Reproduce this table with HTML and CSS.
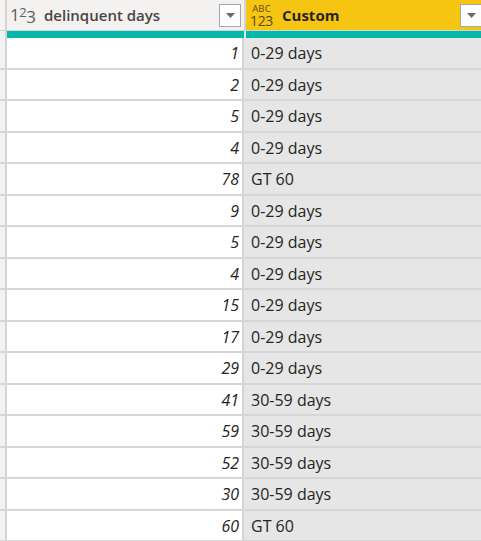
FILE: index.html
```html
<!DOCTYPE html>
<html>
<head>
<meta charset="utf-8">
<link rel="stylesheet" href="styles.css">
</head>
<body>
<div class="grid">
  <div class="row head">
    <div class="gut"></div>
    <div class="c1 hc">
      <span class="t123">1<sup>2</sup><sub>3</sub></span>
      <span class="hname">delinquent days</span>
      <span class="dd"><svg width="9" height="5" viewBox="0 0 9 5"><path d="M0 0H9L4.5 5Z" fill="#6b6b6b"/></svg></span>
    </div>
    <div class="c2 hc sel">
      <span class="tabc"><span class="ta">ABC</span><span class="tn">123</span></span>
      <span class="hname">Custom</span>
      <span class="dd"><svg width="9" height="5" viewBox="0 0 9 5"><path d="M0 0H9L4.5 5Z" fill="#6b6b6b"/></svg></span>
    </div>
  </div>
  <div class="row bar">
    <div class="gut"></div>
    <div class="c1 teal"></div>
    <div class="c2 teal"></div>
  </div>
  <div class="body">
    <div class="row r"><div class="gut"></div><div class="c1 num">1</div><div class="c2 txt">0-29 days</div></div>
    <div class="row r"><div class="gut"></div><div class="c1 num">2</div><div class="c2 txt">0-29 days</div></div>
    <div class="row r"><div class="gut"></div><div class="c1 num">5</div><div class="c2 txt">0-29 days</div></div>
    <div class="row r"><div class="gut"></div><div class="c1 num">4</div><div class="c2 txt">0-29 days</div></div>
    <div class="row r"><div class="gut"></div><div class="c1 num">78</div><div class="c2 txt">GT 60</div></div>
    <div class="row r"><div class="gut"></div><div class="c1 num">9</div><div class="c2 txt">0-29 days</div></div>
    <div class="row r"><div class="gut"></div><div class="c1 num">5</div><div class="c2 txt">0-29 days</div></div>
    <div class="row r"><div class="gut"></div><div class="c1 num">4</div><div class="c2 txt">0-29 days</div></div>
    <div class="row r"><div class="gut"></div><div class="c1 num">15</div><div class="c2 txt">0-29 days</div></div>
    <div class="row r"><div class="gut"></div><div class="c1 num">17</div><div class="c2 txt">0-29 days</div></div>
    <div class="row r"><div class="gut"></div><div class="c1 num">29</div><div class="c2 txt">0-29 days</div></div>
    <div class="row r"><div class="gut"></div><div class="c1 num">41</div><div class="c2 txt">30-59 days</div></div>
    <div class="row r"><div class="gut"></div><div class="c1 num">59</div><div class="c2 txt">30-59 days</div></div>
    <div class="row r"><div class="gut"></div><div class="c1 num">52</div><div class="c2 txt">30-59 days</div></div>
    <div class="row r"><div class="gut"></div><div class="c1 num">30</div><div class="c2 txt">30-59 days</div></div>
    <div class="row r"><div class="gut"></div><div class="c1 num">60</div><div class="c2 txt">GT 60</div></div>
  </div>
</div>
</body>
</html>
```
FILE: styles.css
```css
html, body {
  margin: 0;
  padding: 0;
  background: #ffffff;
  overflow: hidden;
}
body {
  font-family: "Open Sans", "Noto Sans", sans-serif;
  color: #252423;
}
.grid {
  width: 481px;
  height: 541px;
  overflow: hidden;
}
.row {
  display: flex;
}
.gut {
  flex: 0 0 5px;
  background: #f3f2f1;
  border-right: 2px solid #d4d4d4;
}
.c1 {
  flex: 0 0 237px;
  border-right: 2px solid #d4d4d4;
}
.c2 {
  flex: 1 1 auto;
  min-width: 0;
}
.head {
  height: 30px;
  border-bottom: 1px solid #d4d4d4;
}
.hc {
  display: flex;
  align-items: center;
  background: #f3f2f1;
  position: relative;
}
.hc.sel {
  background: #f5c511;
}
.hname {
  font-weight: 600;
  font-size: 15px;
  color: #484644;
}
.sel .hname {
  color: #252423;
  font-weight: 700;
}
.t123 {
  font-size: 17px;
  color: #605e5c;
  margin-left: 3px;
  width: 34px;
  line-height: 1;
  letter-spacing: -0.5px;
}
.t123 sup {
  font-size: 13px;
  vertical-align: 4px;
}
.t123 sub {
  font-size: 17px;
  vertical-align: -2px;
}
.tabc {
  display: flex;
  flex-direction: column;
  align-items: center;
  margin-left: 4px;
  width: 23px;
  margin-right: 9px;
  color: #5b4a10;
}
.ta {
  display: block;
  font-size: 9.5px;
  line-height: 10px;
  letter-spacing: 0.2px;
}
.tn {
  display: block;
  font-size: 14px;
  line-height: 13px;
  letter-spacing: -0.3px;
}
.dd {
  position: absolute;
  right: 3px;
  top: 4px;
  width: 20px;
  height: 21px;
  background: #ffffff;
  border: 1px solid #a6a6a6;
  display: flex;
  align-items: center;
  justify-content: center;
}
.sel .dd {
  right: -1px;
}
.bar {
  height: 7px;
}
.teal {
  background: #01b8aa;
}
.bar .c1 {
  border-right-color: #e6e6e6;
}
.r {
  height: 30px;
  border-bottom: 2px solid #d6d6d6;
}
.r:nth-child(even) {
  height: 29px;
}
.num {
  font-style: italic;
  font-size: 16px;
  padding-right: 3px;
  display: flex;
  align-items: center;
  justify-content: flex-end;
  box-sizing: border-box;
}
.txt {
  background: #e6e6e6;
  font-size: 16px;
  padding-left: 7px;
  display: flex;
  align-items: center;
}
```
